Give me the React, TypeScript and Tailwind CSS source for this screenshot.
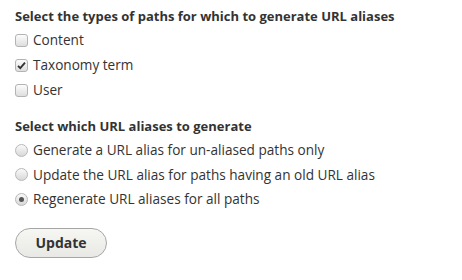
import React from "react"

const font = { fontFamily: "'Open Sans', 'DejaVu Sans', sans-serif" }

const Check = ({ on }: { on?: boolean }) => (
  <span className="relative inline-block w-[13px] h-[13px] rounded-[3px] border border-[#b3b3b3] bg-gradient-to-b from-[#fcfcfc] to-[#dedede] shrink-0">
    {on && (
      <svg viewBox="0 0 13 13" className="absolute -left-px -top-px w-[13px] h-[13px]">
        <path d="M3 6.8 L5.3 9.2 L10 3.6" fill="none" stroke="#333" strokeWidth="1.8" />
      </svg>
    )}
  </span>
)

const Radio = ({ on }: { on?: boolean }) => (
  <span className="relative inline-flex items-center justify-center w-[13px] h-[13px] rounded-full border border-[#b8b8b8] bg-gradient-to-b from-[#fafafa] to-[#d8d8d8] shrink-0">
    {on && <span className="w-[5px] h-[5px] rounded-full bg-[#555]" />}
  </span>
)

export default function App() {
  const types = [
    { l: "Content", on: false },
    { l: "Taxonomy term", on: true },
    { l: "User", on: false },
  ]
  const opts = [
    { l: "Generate a URL alias for un-aliased paths only", on: false },
    { l: "Update the URL alias for paths having an old URL alias", on: false },
    { l: "Regenerate URL aliases for all paths", on: true },
  ]
  return (
    <div className="w-[462px] h-[280px] bg-white text-[#333] px-[15px] pt-[6px]" style={font}>
      <div className="font-bold text-[13px] leading-[20px]">Select the types of paths for which to generate URL aliases</div>
      <div className="flex flex-col mt-[2px]">
        {types.map((t) => (
          <div key={t.l} className="flex items-center gap-[5px] h-[25px] text-[13.6px]">
            <Check on={t.on} />
            <span>{t.l}</span>
          </div>
        ))}
      </div>
      <div className="font-bold text-[13px] leading-[20px] mt-[13px]">Select which URL aliases to generate</div>
      <div className="flex flex-col mt-[2px]">
        {opts.map((t) => (
          <div key={t.l} className="flex items-center gap-[5px] h-[24.5px] text-[13.6px]">
            <Radio on={t.on} />
            <span>{t.l}</span>
          </div>
        ))}
      </div>
      <button className="mt-[16px] w-[92px] h-[30px] rounded-full border border-[#a6a6a6] bg-gradient-to-b from-[#f6f6f3] to-[#e8e8e4] font-bold text-[14px] text-[#333]">
        Update
      </button>
    </div>
  )
}
